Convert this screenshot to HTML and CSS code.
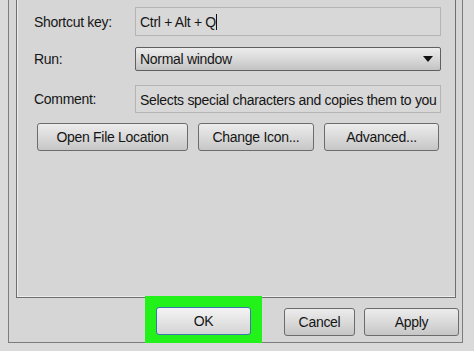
FILE: index.html
```html
<!DOCTYPE html>
<html lang="en">
<head>
  <meta charset="UTF-8">
  <title>Shortcut Properties</title>
  <link rel="stylesheet" href="styles.css">
</head>
<body>
  <div class="window">
    <div class="panel">
      <div class="row">
        <span class="label">Shortcut key:</span>
        <div class="field">Ctrl + Alt + Q<span class="caret"></span></div>
      </div>
      <div class="row">
        <span class="label">Run:</span>
        <div class="select">
          <span>Normal window</span>
          <svg class="arrow" width="10" height="6" viewBox="0 0 10 6"><path d="M0 0h10L5 6z" fill="#111"/></svg>
        </div>
      </div>
      <div class="row">
        <span class="label">Comment:</span>
        <div class="field">Selects special characters and copies them to you</div>
      </div>
      <div class="actions">
        <button class="btn wide">Open File Location</button>
        <button class="btn mid">Change Icon...</button>
        <button class="btn adv">Advanced...</button>
      </div>
    </div>

    <div class="footer">
      <div class="highlight">
        <button class="btn ok">OK</button>
      </div>
      <button class="btn cancel">Cancel</button>
      <button class="btn apply">Apply</button>
    </div>
  </div>
</body>
</html>
```

FILE: styles.css
```css
body {
  margin: 0;
  background-color: #dadada;
  font-family: "Liberation Sans", Arial, sans-serif;
  font-size: 14px;
  letter-spacing: -0.3px;
  color: #151515;
}

.window {
  margin-left: 8px;
  width: 455px;
  height: 343px;
  border-left: 1px solid #7c7c7c;
  border-right: 1px solid #7c7c7c;
  border-bottom: 1px solid #7c7c7c;
  background-color: #d6d6d6;
  box-sizing: border-box;
}

.panel {
  margin-left: 7px;
  width: 440px;
  height: 298px;
  border-left: 1px solid #6e6e6e;
  border-right: 1px solid #6e6e6e;
  border-bottom: 1px solid #6e6e6e;
  box-shadow: inset 1px 0 0 #ededed, inset 0 -1px 0 #ededed;
  box-sizing: border-box;
  padding: 7px 14px 0 17px;
}

.row {
  display: flex;
  align-items: center;
  height: 29px;
  margin-bottom: 10px;
}

.label {
  width: 101px;
  flex-shrink: 0;
}

.field {
  flex: 1;
  height: 29px;
  box-sizing: border-box;
  border: 1px solid #b4b4b4;
  background-color: #d8d8d8;
  padding: 2px 4px 0;
  line-height: 24px;
  white-space: nowrap;
  overflow: hidden;
}

.caret {
  display: inline-block;
  width: 1px;
  height: 16px;
  background-color: #111;
  vertical-align: -3px;
}

.select {
  flex: 1;
  height: 24px;
  box-sizing: border-box;
  display: flex;
  align-items: center;
  justify-content: space-between;
  padding: 0 7px 0 4px;
  border: 1px solid #5f5f5f;
  border-radius: 2px;
  background: linear-gradient(#ececec, #d9d9d9 50%, #c3c3c3);
}

.row:nth-child(2) {
  height: 24px;
  margin-top: 11px;
  margin-bottom: 14px;
}

.row:nth-child(3) {
  height: 28px;
}

.row:nth-child(3) .field {
  height: 28px;
}

.actions {
  display: flex;
  gap: 10px;
  margin-top: 2px;
  padding-left: 3px;
}

.btn {
  height: 28px;
  box-sizing: border-box;
  border: 1px solid #6c6c6c;
  border-radius: 3px;
  background: linear-gradient(#ececec, #dadada 50%, #c6c6c6);
  font-family: inherit;
  font-size: 14px;
  letter-spacing: -0.3px;
  color: #151515;
  padding: 0;
}

.btn.wide { width: 151px; }
.btn.mid { width: 116px; }
.btn.adv { width: 115px; }

.footer {
  display: flex;
  align-items: center;
  height: 44px;
  padding-top: 3px;
  box-sizing: border-box;
  padding-left: 136px;
}

.highlight {
  background-color: #22f21a;
  padding: 11px 11px 12px;
  margin-right: 22px;
}

.btn.ok {
  width: 95px;
  display: block;
  border-color: #3a78ad;
  background: linear-gradient(#f4f4f4, #e4e4e4 50%, #d4d4d4);
}

.btn.cancel {
  width: 71px;
  margin-right: 9px;
}

.btn.apply {
  width: 95px;
}
```
